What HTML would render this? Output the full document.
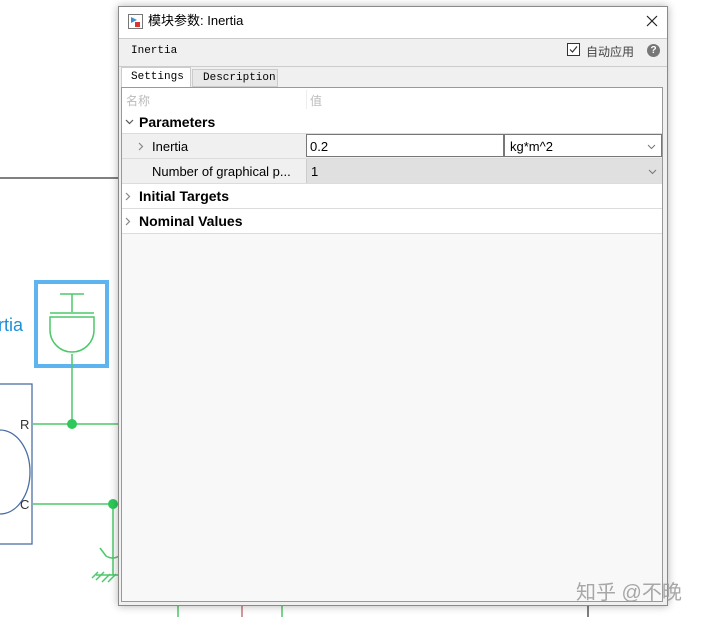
<!DOCTYPE html>
<html><head><meta charset="utf-8"><style>
body{margin:0;width:702px;height:617px;background:#fff;position:relative;overflow:hidden;font-family:"Liberation Sans","Noto Sans CJK SC",sans-serif;}
.a{position:absolute}
.dlg{left:118px;top:6px;width:548px;height:598px;background:#f0f0f0;border:1px solid #8a8a8a;box-shadow:0 0 8px rgba(0,0,0,.3)}
.mono{font-family:"Liberation Mono","Noto Sans CJK SC",monospace;font-size:11px}
.row{position:absolute;left:0;width:540px;border-bottom:1px solid #dcdcdc;font-size:13px;color:#000}
</style></head><body>
<svg class="a" style="left:0;top:0" width="702" height="617">
<line x1="0" y1="178" x2="120" y2="178" stroke="#000" stroke-width="1"/>
<rect x="36" y="282" width="71" height="84" fill="none" stroke="#5eb4ef" stroke-width="4"/>
<g stroke="#4cc96a" stroke-width="1.5" fill="none">
<line x1="60" y1="294" x2="84" y2="294"/><line x1="72" y1="294" x2="72" y2="312"/>
<line x1="50" y1="313" x2="94" y2="313"/>
<path d="M50 317 V330 A22 22 0 0 0 94 330 V317 Z"/>
<line x1="72" y1="354" x2="72" y2="424"/>
<line x1="33" y1="424" x2="120" y2="424"/>
<line x1="33" y1="504" x2="120" y2="504"/>
<line x1="113" y1="504" x2="113" y2="575"/>
<path d="M100 548 L106 556 Q113 560 119 556"/>
<line x1="92" y1="578" x2="98" y2="572"/><line x1="96" y1="580" x2="104" y2="572"/><line x1="102" y1="582" x2="110" y2="574"/><line x1="108" y1="582" x2="116" y2="574"/>
<line x1="96" y1="575" x2="120" y2="575"/>
<line x1="178" y1="604" x2="178" y2="617"/><line x1="282" y1="604" x2="282" y2="617"/>
</g>
<circle cx="72" cy="424" r="5" fill="#2ec95a"/><circle cx="113" cy="504" r="5" fill="#2ec95a"/>
<rect x="-10" y="384" width="42" height="160" fill="none" stroke="#4a6fa5" stroke-width="1.3"/>
<path d="M0 430 A30 42 0 0 1 0 514" fill="none" stroke="#4a6fa5" stroke-width="1.3"/>
<line x1="242" y1="604" x2="242" y2="617" stroke="#a33" />
<line x1="588" y1="604" x2="588" y2="617" stroke="#000"/>
<text x="-2" y="331" font-size="18" fill="#1e90d8" font-family="Liberation Sans">rtia</text>
<text x="20" y="429" font-size="13" fill="#333" font-family="Liberation Sans">R</text>
<text x="20" y="509" font-size="13" fill="#333" font-family="Liberation Sans">C</text>
</svg>
<div class="a dlg">
 <div class="a" style="left:0;top:0;width:548px;height:31px;background:#fff;border-bottom:1px solid #ccc"></div>
 <svg class="a" style="left:9px;top:7px" width="16" height="16"><rect x="0.5" y="0.5" width="14" height="14" fill="#fff" stroke="#777"/><path d="M3 3 L9 6 L3 9Z" fill="#3a8fd0"/><rect x="7" y="8" width="5" height="5" fill="#d33"/></svg>
 <div class="a" style="left:29px;top:6px;font-size:13px;line-height:16px">模块参数: Inertia</div>
 <svg class="a" style="left:527px;top:8px" width="12" height="12"><path d="M1 1 L11 11 M11 1 L1 11" stroke="#222" stroke-width="1.2"/></svg>
 <div class="a mono" style="left:12px;top:38px">Inertia</div>
 <svg class="a" style="left:448px;top:36px" width="14" height="14"><rect x="0.5" y="0.5" width="12" height="12" fill="#fff" stroke="#333"/><path d="M3 6.5 L5.5 9 L10 3.5" stroke="#333" fill="none" stroke-width="1.2"/></svg>
 <div class="a" style="left:467px;top:36px;font-size:12px;color:#444">自动应用</div>
 <div class="a" style="left:528px;top:37px;width:13px;height:13px;border-radius:50%;background:#777;color:#fff;font-size:10px;text-align:center;line-height:13px;font-weight:bold">?</div>
 <div class="a" style="left:0;top:59px;width:548px;height:1px;background:#ccc"></div>
 <div class="a mono" style="left:2px;top:60px;width:70px;height:20px;background:#fff;border:1px solid #ccc;border-bottom:none;line-height:19px;padding-left:9px;box-sizing:border-box">Settings</div>
 <div class="a mono" style="left:73px;top:62px;width:86px;height:18px;background:#e8e8e8;border:1px solid #ccc;line-height:17px;padding-left:10px;box-sizing:border-box">Description</div>
 <div class="a" style="left:2px;top:80px;width:540px;height:513px;background:#f8f8f8;border:1px solid #999">
  <div class="row" style="top:0;height:23px;background:#fff;border:none"><span class="a" style="left:4px;top:4px;color:#bbb;font-size:12px">名称</span><span class="a" style="left:184px;top:2px;width:1px;height:19px;background:#eee"></span><span class="a" style="left:188px;top:4px;color:#bbb;font-size:12px">值</span></div>
  <div class="row" style="top:23px;height:22px;background:#fff"><svg class="a" style="left:3px;top:8px" width="9" height="6"><path d="M1 1 L4.5 4.5 L8 1" stroke="#555" fill="none" stroke-width="1.2"/></svg><b class="a" style="left:17px;top:3px;font-size:14px">Parameters</b></div>
  <div class="row" style="top:46px;height:24px;background:#f0f0f0"><svg class="a" style="left:16px;top:8px" width="6" height="9"><path d="M1 1 L4.5 4.5 L1 8" stroke="#888" fill="none" stroke-width="1.2"/></svg><span class="a" style="left:30px;top:5px">Inertia</span>
   <div class="a" style="left:184px;top:0;width:198px;height:23px;background:#fff;border:1px solid #777;box-sizing:border-box;padding:4px 3px">0.2</div>
   <div class="a" style="left:382px;top:0;width:158px;height:23px;background:#fff;border:1px solid #777;box-sizing:border-box;padding:4px 5px">kg*m^2<svg class="a" style="right:5px;top:9px" width="9" height="6"><path d="M1 1 L4.5 4.5 L8 1" stroke="#777" fill="none"/></svg></div></div>
  <div class="row" style="top:71px;height:24px;background:#f0f0f0"><span class="a" style="left:30px;top:5px">Number of graphical p...</span>
   <div class="a" style="left:184px;top:0;width:356px;height:24px;background:#e0e0e0;border-left:1px solid #ccc;box-sizing:border-box;padding:5px 4px">1<svg class="a" style="right:5px;top:10px" width="9" height="6"><path d="M1 1 L4.5 4.5 L8 1" stroke="#777" fill="none"/></svg></div></div>
  <div class="row" style="top:96px;height:24px;background:#fff"><svg class="a" style="left:3px;top:8px" width="6" height="9"><path d="M1 1 L4.5 4.5 L1 8" stroke="#888" fill="none" stroke-width="1.2"/></svg><b class="a" style="left:17px;top:4px;font-size:14px">Initial Targets</b></div>
  <div class="row" style="top:121px;height:24px;background:#fff"><svg class="a" style="left:3px;top:8px" width="6" height="9"><path d="M1 1 L4.5 4.5 L1 8" stroke="#888" fill="none" stroke-width="1.2"/></svg><b class="a" style="left:17px;top:4px;font-size:14px">Nominal Values</b></div>
 </div>
</div>
<div class="a" style="left:576px;top:576px;font-size:20px;color:#999;opacity:.85">知乎 @不晚</div>
</body></html>
